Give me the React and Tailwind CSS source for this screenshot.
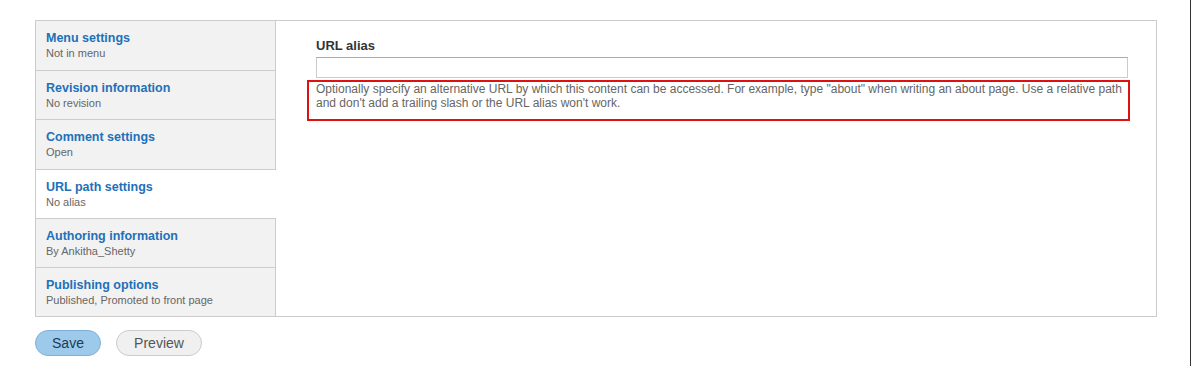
import React from "react";

const tabs = [
  { title: "Menu settings", summary: "Not in menu" },
  { title: "Revision information", summary: "No revision" },
  { title: "Comment settings", summary: "Open" },
  { title: "URL path settings", summary: "No alias", active: true },
  { title: "Authoring information", summary: "By Ankitha_Shetty" },
  { title: "Publishing options", summary: "Published, Promoted to front page" },
];

export default function App() {
  return (
    <div
      className="relative h-[366px] w-[1191px] overflow-hidden border-r border-[#333] bg-white text-[#333]"
      style={{ fontFamily: '"Liberation Sans", Arial, sans-serif' }}
    >
      <div className="pl-[35px] pr-[33px] pt-[20px]">
        <div className="flex border border-[#ccc]">
          <ul className="w-[240px] shrink-0">
            {tabs.map((t, i) => (
              <li
                key={t.title}
                className={
                  "h-[49.2px] pl-[10px] pt-[9px] " +
                  (i > 0 ? "border-t border-[#ccc] " : "") +
                  (t.active ? "bg-white" : "border-r border-[#ccc] bg-[#f2f2f2]")
                }
              >
                <div className="text-[12.5px] font-bold leading-[16px] text-[#2270b8]">{t.title}</div>
                <div className="text-[11px] leading-[15px] text-[#666]">{t.summary}</div>
              </li>
            ))}
          </ul>
          <div className="flex-1 pl-[40px] pr-[28px] pt-[17px]">
            <div className="text-[13px] font-bold leading-[16px] text-[#333]">URL alias</div>
            <input
              type="text"
              className="mt-[3px] block h-[21px] w-full border border-[#ccc] border-t-[#aaa] bg-white outline-none"
            />
            <div className="-ml-[9px] -mr-[2px] mt-[2px] h-[41px] border-2 border-[#d11] pl-[7px] text-[12px] leading-[14px] text-[#666]">
              Optionally specify an alternative URL by which this content can be accessed. For example, type "about" when writing an about page. Use a relative path and don't add a trailing slash or the URL alias won't work.
            </div>
          </div>
        </div>
        <div className="mt-[13px] flex gap-[15px]">
          <button className="h-[26px] w-[66px] rounded-full border border-[#7fb0d6] bg-[#9dcaeb] text-[14px] text-[#1f3b55]">
            Save
          </button>
          <button className="h-[26px] w-[86px] rounded-full border border-[#ccc] bg-[#f0f0f0] text-[14px] text-[#555]">
            Preview
          </button>
        </div>
      </div>
    </div>
  );
}
